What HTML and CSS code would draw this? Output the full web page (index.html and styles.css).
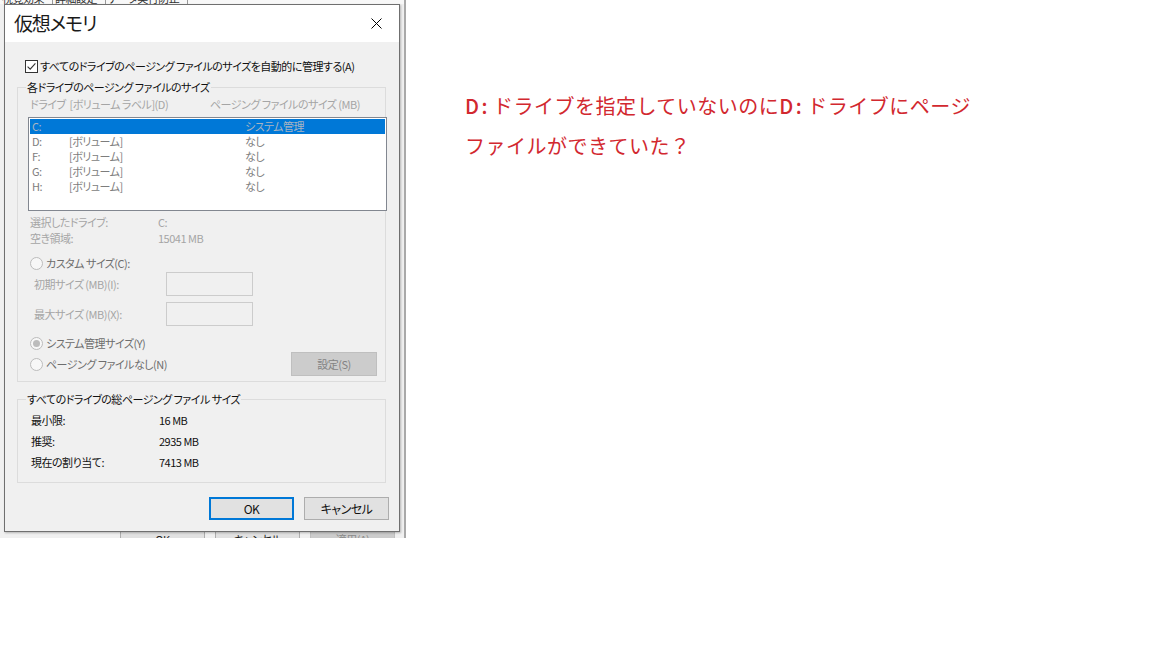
FILE: index.html
```html
<!DOCTYPE html>
<html lang="ja">
<head>
<meta charset="utf-8">
<title>仮想メモリ</title>
<link rel="stylesheet" href="styles.css">
</head>
<body>
<div class="page">
  <div class="shot">
    <div class="bg-tabs">
      <span class="bg-tab">視覚効果</span>
      <span class="bg-tab">詳細設定</span>
      <span class="bg-tab">データ実行防止</span>
    </div>
    <div class="bg-fill"></div>
    <div class="bg-buttons">
      <span class="bg-btn">OK</span>
      <span class="bg-btn">キャンセル</span>
      <span class="bg-btn bg-btn-dis">適用(A)</span>
    </div>

    <div class="dialog">
      <div class="titlebar">
        <span class="title">仮想メモリ</span>
        <svg class="close" width="11" height="11" viewBox="0 0 11 11"><path d="M0.5 0.5L10.5 10.5M10.5 0.5L0.5 10.5" stroke="#000" stroke-width="1" fill="none"/></svg>
      </div>
      <div class="body">
        <div class="check-row">
          <svg class="checkbox" width="13" height="13" viewBox="0 0 13 13"><rect x="0.5" y="0.5" width="12" height="12" fill="#fff" stroke="#333"/><path d="M2.6 6.6L5.2 9.2L10.4 3.4" stroke="#333" stroke-width="1.1" fill="none"/></svg>
          <span>すべてのドライブのページング ファイルのサイズを自動的に管理する(A)</span>
        </div>

        <fieldset class="group group1">
          <legend>各ドライブのページング ファイルのサイズ</legend>
          <div class="g1-inner">
            <div class="col-head">
              <span class="ch1">ドライブ&nbsp;&nbsp;[ボリューム ラベル](D)</span>
              <span class="ch2">ページング ファイルのサイズ (MB)</span>
            </div>
            <div class="listbox">
              <div class="lrow sel"><span>C:</span><span></span><span>システム管理</span></div>
              <div class="lrow"><span>D:</span><span>[ボリューム]</span><span>なし</span></div>
              <div class="lrow"><span>F:</span><span>[ボリューム]</span><span>なし</span></div>
              <div class="lrow"><span>G:</span><span>[ボリューム]</span><span>なし</span></div>
              <div class="lrow"><span>H:</span><span>[ボリューム]</span><span>なし</span></div>
            </div>
            <div class="info">
              <span>選択したドライブ:</span><span>C:</span>
              <span>空き領域:</span><span>15041 MB</span>
            </div>
            <div class="radio-row r-custom">
              <span class="radio"></span><span class="rlabel">カスタム サイズ(C):</span>
            </div>
            <div class="size-row sr1">
              <span class="size-label">初期サイズ (MB)(I):</span><span class="input"></span>
            </div>
            <div class="size-row sr2">
              <span class="size-label">最大サイズ (MB)(X):</span><span class="input"></span>
            </div>
            <div class="radio-row r-system">
              <span class="radio checked"></span><span class="rlabel">システム管理サイズ(Y)</span>
            </div>
            <div class="radio-row r-none">
              <span class="radio"></span><span class="rlabel">ページング ファイルなし(N)</span>
              <span class="set-btn">設定(S)</span>
            </div>
          </div>
        </fieldset>

        <fieldset class="group group2">
          <legend>すべてのドライブの総ページング ファイル サイズ</legend>
          <div class="totals">
            <span>最小限:</span><span>16 MB</span>
            <span>推奨:</span><span>2935 MB</span>
            <span>現在の割り当て:</span><span>7413 MB</span>
          </div>
        </fieldset>

        <div class="buttons">
          <span class="btn btn-default">OK</span>
          <span class="btn">キャンセル</span>
        </div>
      </div>
    </div>
  </div>

  <div class="note">
    <p><span class="lat">D:</span>ドライブを指定していないのに<span class="lat">D:</span>ドライブにページ</p>
    <p>ファイルができていた？</p>
  </div>
</div>
</body>
</html>
```

FILE: styles.css
```css
html, body {
  margin: 0;
  padding: 0;
  background: #ffffff;
}

.page {
  display: flex;
  align-items: flex-start;
  width: 1152px;
  height: 648px;
  font-family: "Noto Sans CJK JP", "Noto Sans", sans-serif;
}

/* background window (System properties) */
.shot {
  position: relative;
  width: 406px;
  height: 538px;
  box-sizing: border-box;
  background: #f0f0f0;
  border-right: 2px solid #a9a9a9;
  display: flex;
  flex-direction: column;
  overflow: hidden;
  font-size: 11px;
  letter-spacing: -0.5px;
  font-feature-settings: "palt" 1;
}

.bg-tabs {
  height: 4px;
  overflow: hidden;
  display: flex;
  background: #f8f8f8;
  color: #333;
}
.bg-tab {
  display: block;
  line-height: 14px;
  margin-top: -9px;
  padding: 0 8px 0 2px;
  border-right: 1px solid #999;
}

.bg-fill {
  flex: 1;
}

.bg-buttons {
  height: 8px;
  overflow: hidden;
  display: flex;
  gap: 10px;
  padding-left: 120px;
  background: #f0f0f0;
}
.bg-btn {
  display: block;
  width: 85px;
  height: 23px;
  box-sizing: border-box;
  border: 1px solid #adadad;
  background: #e1e1e1;
  text-align: center;
  line-height: 21px;
  color: #222;
  margin-top: -2px;
}
.bg-btn-dis {
  background: #cccccc;
  border-color: #bfbfbf;
  color: #8a8a8a;
}

/* dialog window floating over the background window */
.dialog {
  position: absolute;
  left: 4px;
  top: 4px;
  width: 396px;
  height: 528px;
  box-sizing: border-box;
  border: 1px solid #6f6f6f;
  background: #f0f0f0;
  box-shadow: 1px 1px 2px rgba(0,0,0,0.25);
  display: flex;
  flex-direction: column;
  color: #000;
}

.titlebar {
  height: 37px;
  flex: none;
  background: #ffffff;
  display: flex;
  align-items: center;
  padding-left: 9px;
}
.title {
  font-size: 19px;
  line-height: 24px;
  color: #1a1a1a;
  letter-spacing: -1.2px;
  margin-top: -1px;
}
.close {
  margin-left: auto;
  margin-right: 17px;
  margin-top: -1px;
}

.body {
  padding: 0 10px 0 12px;
  display: flex;
  flex-direction: column;
}

.check-row {
  display: flex;
  align-items: center;
  height: 14px;
  line-height: 14px;
  margin-top: 17px;
  padding-left: 8px;
  color: #111;
  white-space: nowrap;
}
.checkbox {
  margin-right: 2px;
  flex: none;
}

.group {
  width: 369px;
  box-sizing: border-box;
  margin: 0;
  border: 1px solid #dcdcdc;
  padding: 0 0 0 8px;
}
.group legend {
  padding: 0 1px;
  line-height: 14px;
  color: #111;
}
.group1 {
  margin-top: 7px;
  padding-bottom: 5px;
}
.g1-inner {
  margin-left: 2px;
}

.col-head {
  display: flex;
  line-height: 14px;
  margin-top: 3px;
  color: #a5a5a5;
  white-space: nowrap;
}
.ch1 {
  width: 180px;
  padding-left: 2px;
}

.listbox {
  margin-top: 6px;
  margin-right: -2px;
  height: 94px;
  box-sizing: border-box;
  border: 1px solid #828790;
  background: #ffffff;
  padding: 1px;
}
.lrow {
  display: grid;
  grid-template-columns: 37px 176px 1fr;
  height: 15px;
  line-height: 15px;
  padding-left: 2px;
  color: #7d7d7d;
}
.lrow.sel {
  background: #0078d7;
  color: #a9b4c2;
}

.info {
  display: grid;
  grid-template-columns: 128px 1fr;
  line-height: 16px;
  margin-top: 3px;
  padding-left: 2px;
  color: #a5a5a5;
}

.radio-row {
  display: flex;
  align-items: center;
  height: 14px;
  line-height: 14px;
  padding-left: 2px;
  color: #6d6d6d;
}
.radio {
  width: 13px;
  height: 13px;
  box-sizing: border-box;
  border: 1px solid #bcbcbc;
  border-radius: 50%;
  background: #f7f7f7;
  margin-right: 3px;
  flex: none;
  display: flex;
  align-items: center;
  justify-content: center;
}
.radio.checked::after {
  content: "";
  width: 7px;
  height: 7px;
  border-radius: 50%;
  background: #bcbcbc;
}
.r-custom {
  margin-top: 10px;
}
.r-system {
  margin-top: 10px;
}
.r-none {
  margin-top: 2px;
  height: 24px;
}

.size-row {
  display: flex;
  align-items: center;
  height: 24px;
  padding-left: 6px;
  color: #a5a5a5;
}
.sr1 {
  margin-top: 2px;
}
.sr2 {
  margin-top: 6px;
}
.size-label {
  width: 132px;
}
.input {
  width: 87px;
  height: 24px;
  box-sizing: border-box;
  border: 1px solid #cccccc;
  background: #f0f0f0;
}

.set-btn {
  margin-left: auto;
  margin-right: 8px;
  width: 86px;
  height: 24px;
  box-sizing: border-box;
  border: 1px solid #bfbfbf;
  background: #cccccc;
  color: #838383;
  text-align: center;
  line-height: 22px;
}

.group2 {
  margin-top: 10px;
  padding-bottom: 9px;
}
.totals {
  display: grid;
  grid-template-columns: 128px 1fr;
  grid-auto-rows: 21px;
  line-height: 21px;
  margin-top: 4px;
  margin-left: 5px;
  color: #111;
}

.buttons {
  display: flex;
  justify-content: flex-end;
  gap: 10px;
  margin-top: 14px;
}
.btn {
  width: 85px;
  height: 23px;
  box-sizing: border-box;
  border: 1px solid #adadad;
  background: #e1e1e1;
  text-align: center;
  line-height: 21px;
  color: #111;
  font-size: 12px;
}
.btn-default {
  border: 2px solid #0078d7;
  line-height: 19px;
}

/* red annotation */
.note {
  margin-left: 59px;
  padding-top: 86px;
  color: #d2282f;
  font-size: 20px;
  letter-spacing: 0.5px;
}
.note p {
  margin: 0;
  line-height: 40px;
  white-space: nowrap;
}
.note .lat {
  font-weight: 500;
  letter-spacing: 2.5px;
  margin-right: 3px;
}
```
